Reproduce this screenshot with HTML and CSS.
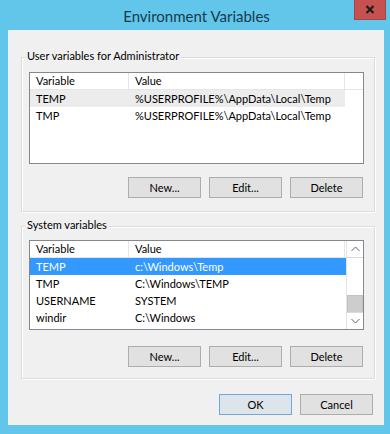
FILE: index.html
```html
<!DOCTYPE html>
<html>
<head>
<meta charset="utf-8">
<link rel="stylesheet" href="styles.css">
</head>
<body>
<div class="window">
  <div class="titlebar">
    <div class="title">Environment Variables</div>
    <div class="close">
      <svg width="10" height="9" viewBox="0 0 10 9"><path d="M1.5 1 L8.5 8 M8.5 1 L1.5 8" stroke="#1d1d1d" stroke-width="2.2" fill="none"/></svg>
    </div>
  </div>
  <div class="client">
    <div class="group">
      <div class="group-label">User variables for Administrator</div>
      <div class="list list-user">
        <div class="cols">
          <div class="row head"><div class="c1">Variable</div><div class="c2">Value</div><div class="c3"></div></div>
          <div class="row hover"><div class="c1">TEMP</div><div class="c2">%USERPROFILE%\AppData\Local\Temp</div></div>
          <div class="row"><div class="c1">TMP</div><div class="c2">%USERPROFILE%\AppData\Local\Temp</div></div>
        </div>
      </div>
      <div class="buttons">
        <button class="btn">New...</button>
        <button class="btn">Edit...</button>
        <button class="btn">Delete</button>
      </div>
    </div>
    <div class="group group-sys">
      <div class="group-label">System variables</div>
      <div class="list list-sys">
        <div class="cols">
          <div class="row head"><div class="c1">Variable</div><div class="c2">Value</div></div>
          <div class="row selected"><div class="c1">TEMP</div><div class="c2">c:\Windows\Temp</div></div>
          <div class="row"><div class="c1">TMP</div><div class="c2">C:\Windows\TEMP</div></div>
          <div class="row"><div class="c1">USERNAME</div><div class="c2">SYSTEM</div></div>
          <div class="row"><div class="c1">windir</div><div class="c2">C:\Windows</div></div>
        </div>
        <div class="scrollbar">
          <div class="sb-btn sb-up"><svg width="9" height="6" viewBox="0 0 9 6"><path d="M0.5 5 L4.5 1 L8.5 5" stroke="#606060" stroke-width="1" fill="none"/></svg></div>
          <div class="sb-track"><div class="sb-thumb"></div></div>
          <div class="sb-btn sb-down"><svg width="9" height="6" viewBox="0 0 9 6"><path d="M0.5 1 L4.5 5 L8.5 1" stroke="#606060" stroke-width="1" fill="none"/></svg></div>
        </div>
      </div>
      <div class="buttons buttons-sys">
        <button class="btn">New...</button>
        <button class="btn">Edit...</button>
        <button class="btn">Delete</button>
      </div>
    </div>
    <div class="dialog-buttons">
      <button class="btn btn-default">OK</button>
      <button class="btn">Cancel</button>
    </div>
  </div>
</div>
</body>
</html>
```

FILE: styles.css
```css
* { box-sizing: border-box; }
html, body { margin: 0; padding: 0; }
body {
  width: 390px;
  height: 434px;
  overflow: hidden;
  font-family: "Lato", "Noto Sans", sans-serif;
  font-size: 11px;
  color: #000;
}
.window {
  width: 390px;
  height: 434px;
  background: #62c6ea;
  display: flex;
  flex-direction: column;
}
.titlebar {
  height: 30px;
  display: grid;
  grid-template-columns: 1fr auto 1fr;
  flex: none;
}
.title {
  grid-column: 2;
  font-size: 15px;
  line-height: 32px;
  color: #173b4c;
  padding-left: 3px;
}
.close {
  grid-column: 3;
  justify-self: end;
  align-self: start;
  width: 32px;
  height: 20px;
  margin-right: 4px;
  background: #c75050;
  border: 1px solid #a34646;
  border-top: none;
  display: flex;
  align-items: center;
  justify-content: center;
}
.client {
  flex: 1;
  margin: 0 6px 9px 8px;
  background: #f0f0f0;
  padding: 27px 9px 0 13px;
  display: flex;
  flex-direction: column;
}
.group {
  border: 1px solid #dcdcdc;
  box-shadow: inset 1px 1px 0 #fff, 1px 1px 0 #fff;
  padding: 0 10px 13px 7px;
}
.group-sys {
  margin-top: 14px;
  padding-bottom: 11px;
}
.group-label {
  width: fit-content;
  margin: -10px 0 0 -4px;
  padding: 0 2px;
  height: 16px;
  line-height: 16px;
  background: #f0f0f0;
  color: #000;
}
.list {
  margin-top: 8px;
  border: 1px solid #828790;
  background: #fff;
  display: flex;
}
.list-user { height: 92px; }
.list-sys { height: 90px; margin-top: 7px; }
.cols {
  flex: 1;
  display: flex;
  flex-direction: column;
}
.row {
  height: 17px;
  display: grid;
  grid-template-columns: 99px 216px 1fr;
  line-height: 17px;
  white-space: nowrap;
}
.list-sys .row { grid-template-columns: 99px 216px; }
.row > div { padding-left: 6px; overflow: hidden; }
.head { border-bottom: 1px solid #e5e5e5; height: 17px; line-height: 16px; }
.head .c1, .head .c2 { border-right: 1px solid #e5e5e5; }
.hover .c1, .hover .c2 { background: #ececec; }
.selected { background: #3399ff; color: #fff; }
.scrollbar {
  width: 17px;
  flex: none;
  display: flex;
  flex-direction: column;
  background: #fff;
  border-left: 1px solid #e3e3e3;
}
.sb-btn {
  height: 17px;
  display: flex;
  align-items: center;
  justify-content: center;
  border: 1px solid #dadada;
  border-left: none;
  border-right: none;
}
.sb-up { border-top: none; }
.sb-down { border-bottom: none; }
.sb-track {
  flex: 1;
  display: flex;
  flex-direction: column;
  justify-content: flex-end;
}
.sb-thumb {
  height: 17px;
  background: #cdcdcd;
  border: 1px solid #c2c2c2;
  border-bottom: none;
}
.buttons {
  margin-top: 13px;
  display: flex;
  justify-content: flex-end;
  gap: 8px;
  padding-right: 1px;
}
.buttons-sys { margin-top: 16px; }
.btn {
  width: 73px;
  height: 21px;
  padding: 0;
  background: #e1e1e1;
  border: 1px solid #adadad;
  font-family: "Lato", "Noto Sans", sans-serif;
  font-size: 11px;
  color: #000;
  line-height: 18px;
}
.btn-default {
  background: #dde4ea;
  border-color: #6ea8dc;
}
.dialog-buttons {
  margin-top: 15px;
  display: flex;
  justify-content: flex-end;
  gap: 8px;
  padding-right: 2px;
}
```
